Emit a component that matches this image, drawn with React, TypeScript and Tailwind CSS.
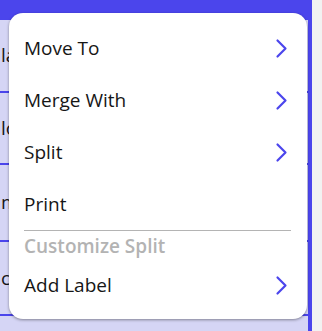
import React from 'react';

const rows = [
  { text: 'la', h: 'h-[73px]' },
  { text: 'lo', h: 'h-[72px]' },
  { text: 'm', h: 'h-[77px]' },
  { text: 'c', h: 'h-[74px]' },
];

const Chevron: React.FC = () => (
  <svg width="13" height="21" viewBox="0 0 13 21" fill="none" className="text-[#4b45ec]">
    <path d="M2.5 2.5l8 8-8 8" stroke="currentColor" strokeWidth="2.2" strokeLinecap="round" strokeLinejoin="round" />
  </svg>
);

const MenuItem: React.FC<{ label: string; sub?: boolean }> = ({ label, sub }) => (
  <div className="h-[52px] flex items-center justify-between pl-[15px] pr-[19px]">
    <span>{label}</span>
    {sub && <Chevron />}
  </div>
);

export default function App() {
  return (
    <div className="relative w-[322px] h-[331px] overflow-hidden bg-[#f2f2f2] font-['Open_Sans',sans-serif] text-[19px] text-[#161616]">
      {/* page behind the menu */}
      <div className="flex h-full">
        <div className="w-[308px] flex flex-col bg-[#d5d5f5]">
          <div className="h-[20px] bg-[#4b45ec] shrink-0" />
          {rows.map((r) => (
            <div key={r.text} className={`${r.h} shrink-0 flex items-center border-b-2 border-[#4b45ec] pl-[1px] leading-none`}>
              {r.text}
            </div>
          ))}
        </div>
        <div className="w-[4px] bg-[#4b45ec]" />
      </div>

      {/* context menu */}
      <div className="absolute left-[9px] top-[13px] w-[298px] h-[306px] bg-white rounded-[14px] shadow-[0_1px_3px_rgba(0,0,0,0.4)] pt-[9px]">
        <MenuItem label="Move To" sub />
        <MenuItem label="Merge With" sub />
        <MenuItem label="Split" sub />
        <MenuItem label="Print" />
        <div className="ml-[15px] mr-[16px] h-px bg-[#b4b4b4]" />
        <div className="pl-[15px] pt-[3px] text-[19px] font-semibold text-[#b3b3b3] leading-[24px]">Customize Split</div>
        <div className="h-[52px] mt-[1px] flex items-center justify-between pl-[15px] pr-[19px]">
          <span>Add Label</span>
          <Chevron />
        </div>
      </div>
    </div>
  );
}
